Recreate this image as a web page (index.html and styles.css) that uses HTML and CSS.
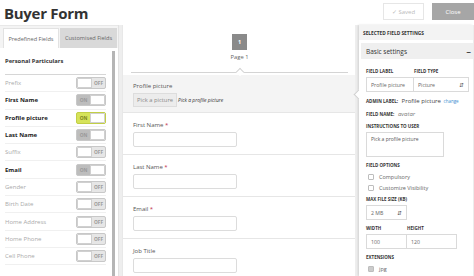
FILE: index.html
```html
<!DOCTYPE html>
<html lang="en">

<head>
    <meta charset="UTF-8">
    <meta name="viewport" content="width=device-width, initial-scale=1.0">
    <title>Buyer Form</title>
    <link rel="stylesheet" href="styles.css">
</head>

<body>
    <div class="topbar">
        <div class="page-title">Buyer Form</div>
        <div class="top-actions">
            <span class="btn-saved">&#10003; Saved</span>
            <span class="btn-close">Close</span>
        </div>
    </div>

    <div class="main">
        <!-- left: field library -->
        <div class="left-panel">
            <div class="tabs">
                <div class="tab active">Predefined Fields</div>
                <div class="tab">Customised Fields</div>
            </div>
            <div class="left-body">
                <div class="field-list">
                    <div class="group-title">Personal Particulars</div>
                    <div class="field-row"><span class="fname">Prefix</span><span class="toggle off"><i></i><b>OFF</b></span></div>
                    <div class="field-row on"><span class="fname">First Name</span><span class="toggle"><b>ON</b><i></i></span></div>
                    <div class="field-row on"><span class="fname">Profile picture</span><span class="toggle lit"><b>ON</b><i></i></span></div>
                    <div class="field-row on"><span class="fname">Last Name</span><span class="toggle"><b>ON</b><i></i></span></div>
                    <div class="field-row"><span class="fname">Suffix</span><span class="toggle off"><i></i><b>OFF</b></span></div>
                    <div class="field-row on"><span class="fname">Email</span><span class="toggle"><b>ON</b><i></i></span></div>
                    <div class="field-row"><span class="fname">Gender</span><span class="toggle off"><i></i><b>OFF</b></span></div>
                    <div class="field-row"><span class="fname">Birth Date</span><span class="toggle off"><i></i><b>OFF</b></span></div>
                    <div class="field-row"><span class="fname">Home Address</span><span class="toggle off"><i></i><b>OFF</b></span></div>
                    <div class="field-row"><span class="fname">Home Phone</span><span class="toggle off"><i></i><b>OFF</b></span></div>
                    <div class="field-row"><span class="fname">Cell Phone</span><span class="toggle off"><i></i><b>OFF</b></span></div>
                </div>
                <div class="scrollbar"></div>
            </div>
        </div>

        <!-- center: form preview -->
        <div class="center-panel">
            <div class="page-head">
                <div class="page-badge">1</div>
                <div class="page-name">Page 1</div>
                <div class="page-line"></div>
            </div>
            <div class="form-item selected">
                <div class="item-label">Profile picture</div>
                <div class="pick-row">
                    <span class="pick-btn">Pick a picture</span>
                    <span class="pick-hint">Pick a profile picture</span>
                </div>
            </div>
            <div class="form-item">
                <div class="item-label">First Name <span class="req">*</span></div>
                <div class="text-input"></div>
            </div>
            <div class="form-item">
                <div class="item-label">Last Name <span class="req">*</span></div>
                <div class="text-input"></div>
            </div>
            <div class="form-item">
                <div class="item-label">Email <span class="req">*</span></div>
                <div class="text-input"></div>
            </div>
            <div class="form-item">
                <div class="item-label">Job Title</div>
                <div class="text-input"></div>
            </div>
        </div>

        <!-- right: settings -->
        <div class="right-panel">
            <div class="pointer"></div>
            <div class="settings-title">SELECTED FIELD SETTINGS</div>
            <div class="settings-section">
                <span>Basic settings</span>
                <span class="collapse">&minus;</span>
            </div>
            <div class="settings-body">
                <div class="pair-labels">
                    <span class="cap w47">FIELD LABEL</span>
                    <span class="cap">FIELD TYPE</span>
                </div>
                <div class="pair-inputs">
                    <span class="box w47">Profile picture</span>
                    <span class="box select w55">Picture<em>&#8693;</em></span>
                </div>
                <div class="info-row"><span class="cap">ADMIN LABEL:</span> <span class="val">Profile picture</span> <span class="link">change</span></div>
                <div class="info-row"><span class="cap">FIELD NAME:</span> <span class="val italic">avatar</span></div>
                <div class="cap block">INSTRUCTIONS TO USER</div>
                <div class="textarea">Pick a profile picture</div>
                <div class="cap block">FIELD OPTIONS</div>
                <div class="check"><i></i>Compulsory</div>
                <div class="check"><i></i>Customize Visibility</div>
                <div class="cap block tight">MAX FILE SIZE (KB)</div>
                <span class="box select w41">2 MB<em>&#8693;</em></span>
                <div class="pair-labels gap-top">
                    <span class="cap w41">WIDTH</span>
                    <span class="cap">HEIGHT</span>
                </div>
                <div class="pair-inputs">
                    <span class="box w41">100</span>
                    <span class="box w50">120</span>
                </div>
                <div class="cap block">EXTENSIONS</div>
                <div class="check checked"><i></i>jpg</div>
            </div>
        </div>
    </div>
</body>

</html>
```

FILE: styles.css
```css
* {
    box-sizing: border-box;
}

body {
    margin: 0;
    width: 474px;
    height: 276px;
    overflow: hidden;
    font-family: "Open Sans", "Noto Sans", sans-serif;
    color: #444444;
    background-color: #ffffff;
}

.topbar {
    display: flex;
    justify-content: space-between;
    align-items: center;
    height: 25px;
}

.page-title {
    font-size: 15px;
    font-weight: bold;
    color: #333333;
    padding-left: 4px;
    letter-spacing: -0.3px;
}

.top-actions {
    display: flex;
    gap: 8px;
    align-self: flex-start;
    margin-top: 3px;
}

.btn-saved,
.btn-close {
    display: flex;
    align-items: center;
    justify-content: center;
    height: 17px;
    font-size: 6px;
}

.btn-saved {
    width: 41px;
    color: #bbbbbb;
    border: 1px solid #e6e6e6;
}

.btn-close {
    width: 42px;
    color: #ffffff;
    background-color: #a6a6a6;
}

.main {
    display: flex;
    height: 251px;
    background-color: #eeeeee;
}

/* left panel */
.left-panel {
    width: 119px;
    display: flex;
    flex-direction: column;
    background-color: #ffffff;
    border-right: 1px solid #e2e2e2;
}

.tabs {
    display: flex;
    height: 23px;
    padding: 2px 0 0 3px;
    background-color: #f4f4f4;
    border-top: 1px solid #e8e8e8;
}

.tab {
    display: flex;
    align-items: center;
    justify-content: center;
    width: 57px;
    font-size: 5.6px;
    color: #666666;
    background-color: #d9d9d9;
}

.tab.active {
    width: 56px;
    background-color: #ffffff;
    border: 1px solid #e2e2e2;
    border-bottom: none;
    margin-right: 1px;
}

.left-body {
    flex: 1;
    display: flex;
}

.field-list {
    flex: 1;
    padding: 0 6px 0 5px;
}

.group-title {
    height: 27px;
    padding-top: 9px;
    font-size: 5.8px;
    font-weight: bold;
    color: #333333;
    border-bottom: 1px solid #d6d6d6;
}

.field-row {
    display: flex;
    justify-content: space-between;
    align-items: center;
    height: 17.3px;
    border-bottom: 1px solid #f0f0f0;
    font-size: 6px;
    color: #aaaaaa;
}

.field-row.on .fname {
    color: #222222;
    font-weight: bold;
}

.toggle {
    display: flex;
    align-items: center;
    width: 30px;
    height: 12px;
    border: 1px solid #c8c8c8;
    border-radius: 2px;
    background-color: #bdbdbd;
    overflow: hidden;
}

.toggle.off {
    background-color: #e6e6e6;
}

.toggle.lit {
    background-color: #d6e35a;
    border-color: #c2cf45;
}

.toggle i {
    display: block;
    width: 15px;
    height: 100%;
    background-color: #ffffff;
    border: 1px solid #d0d0d0;
}

.toggle b {
    flex: 1;
    text-align: center;
    font-size: 4.8px;
    color: #999999;
}

.toggle.lit b {
    color: #7a8420;
}

.scrollbar {
    width: 3px;
    margin: 3px 3px 0 0;
    background-color: #b5b5b5;
}

/* center */
.center-panel {
    width: 233px;
    margin-left: 3px;
    background-color: #ffffff;
    border-left: 1px solid #e8e8e8;
}

.page-head {
    height: 50px;
    padding: 9px 7px 0 8px;
    display: flex;
    flex-direction: column;
    align-items: center;
}

.page-badge {
    width: 15px;
    height: 16px;
    display: flex;
    align-items: center;
    justify-content: center;
    background-color: #8a8a8a;
    color: #ffffff;
    font-size: 5.5px;
    font-weight: bold;
}

.page-name {
    font-size: 5.8px;
    color: #666666;
    margin-top: 3px;
}

.page-line {
    position: relative;
    width: 100%;
    height: 1px;
    margin-top: 11px;
    background-color: #d4d4d4;
}

.page-line::after {
    content: "";
    position: absolute;
    left: 50%;
    top: -3px;
    width: 5px;
    height: 5px;
    margin-left: -3px;
    background-color: #ffffff;
    border-left: 1px solid #d4d4d4;
    border-top: 1px solid #d4d4d4;
    transform: rotate(45deg);
}

.form-item {
    height: 42px;
    padding: 8px 10px 0 10px;
    border-top: 1px solid #e6e6e6;
}

.form-item.selected {
    height: 37px;
    padding-top: 7px;
    background-color: #f4f4f4;
    border-top: none;
}

.item-label {
    font-size: 6px;
    color: #555555;
    height: 10px;
}

.req {
    color: #c0304a;
}

.text-input {
    width: 104px;
    height: 15px;
    margin-top: 1px;
    background-color: #ffffff;
    border: 1px solid #dcdcdc;
    border-radius: 2px;
}

.pick-row {
    display: flex;
    align-items: center;
    margin-top: 1px;
}

.pick-btn {
    padding: 2px 3px;
    font-size: 5.8px;
    color: #888888;
    background-color: #ececec;
    border: 1px solid #dddddd;
}

.pick-hint {
    font-size: 5px;
    font-style: italic;
    color: #333333;
    margin-left: 1px;
}

/* right */
.right-panel {
    position: relative;
    width: 114px;
    margin-left: 4px;
    background-color: #ffffff;
    box-shadow: -1px 0 2px rgba(0, 0, 0, 0.12);
}

.pointer {
    position: absolute;
    left: -4px;
    top: 66px;
    width: 7px;
    height: 7px;
    background-color: #ffffff;
    border-left: 1px solid #d0d0d0;
    border-bottom: 1px solid #d0d0d0;
    transform: rotate(45deg);
}

.settings-title {
    height: 15px;
    padding: 5px 0 0 4px;
    font-size: 4.8px;
    font-weight: bold;
    color: #333333;
    background-color: #f3f3f3;
}

.settings-section {
    display: flex;
    justify-content: space-between;
    align-items: center;
    height: 16px;
    margin: 3px 0 0 2px;
    padding: 0 2px 0 5px;
    font-size: 6.5px;
    color: #333333;
    background-color: #efefef;
}

.collapse {
    font-weight: bold;
    font-size: 8px;
}

.settings-body {
    padding: 9px 0 0 7px;
}

.cap {
    font-size: 4.5px;
    font-weight: bold;
    color: #333333;
}

.cap.block {
    display: block;
    margin: 5px 0 3px 0;
}

.cap.block.tight {
    margin-top: 2px;
}

.pair-labels {
    display: flex;
    height: 9px;
}

.gap-top {
    margin-top: 5px;
}

.pair-inputs {
    display: flex;
}

.w41 {
    width: 41px;
}

.w47 {
    width: 48px;
}

.w50 {
    width: 50px;
}

.w55 {
    width: 55px;
}

.box {
    display: flex;
    align-items: center;
    height: 15px;
    padding: 0 4px;
    font-size: 5.2px;
    color: #666666;
    border: 1px solid #dadada;
}

.box + .box {
    border-left: none;
}

.box.select {
    justify-content: space-between;
}

.box em {
    font-style: normal;
    font-size: 5.5px;
    color: #555555;
}

.info-row {
    margin-top: 5px;
    height: 8px;
    font-size: 6px;
    white-space: nowrap;
}

.val {
    color: #444444;
    margin-left: 2px;
}

.italic {
    font-style: italic;
    color: #777777;
}

.link {
    font-size: 4.5px;
    color: #3b8ed0;
    margin-left: 1px;
}

.textarea {
    width: 78px;
    height: 25px;
    padding: 3px 4px;
    font-size: 5px;
    color: #555555;
    border: 1px solid #dadada;
}

.check {
    display: flex;
    align-items: center;
    height: 11.5px;
    font-size: 5.5px;
    color: #666666;
}

.check i {
    width: 6px;
    height: 6px;
    margin: 0 5px 0 2px;
    border: 1px solid #bdbdbd;
    border-radius: 1px;
}

.check.checked i {
    background-color: #cccccc;
}
```
